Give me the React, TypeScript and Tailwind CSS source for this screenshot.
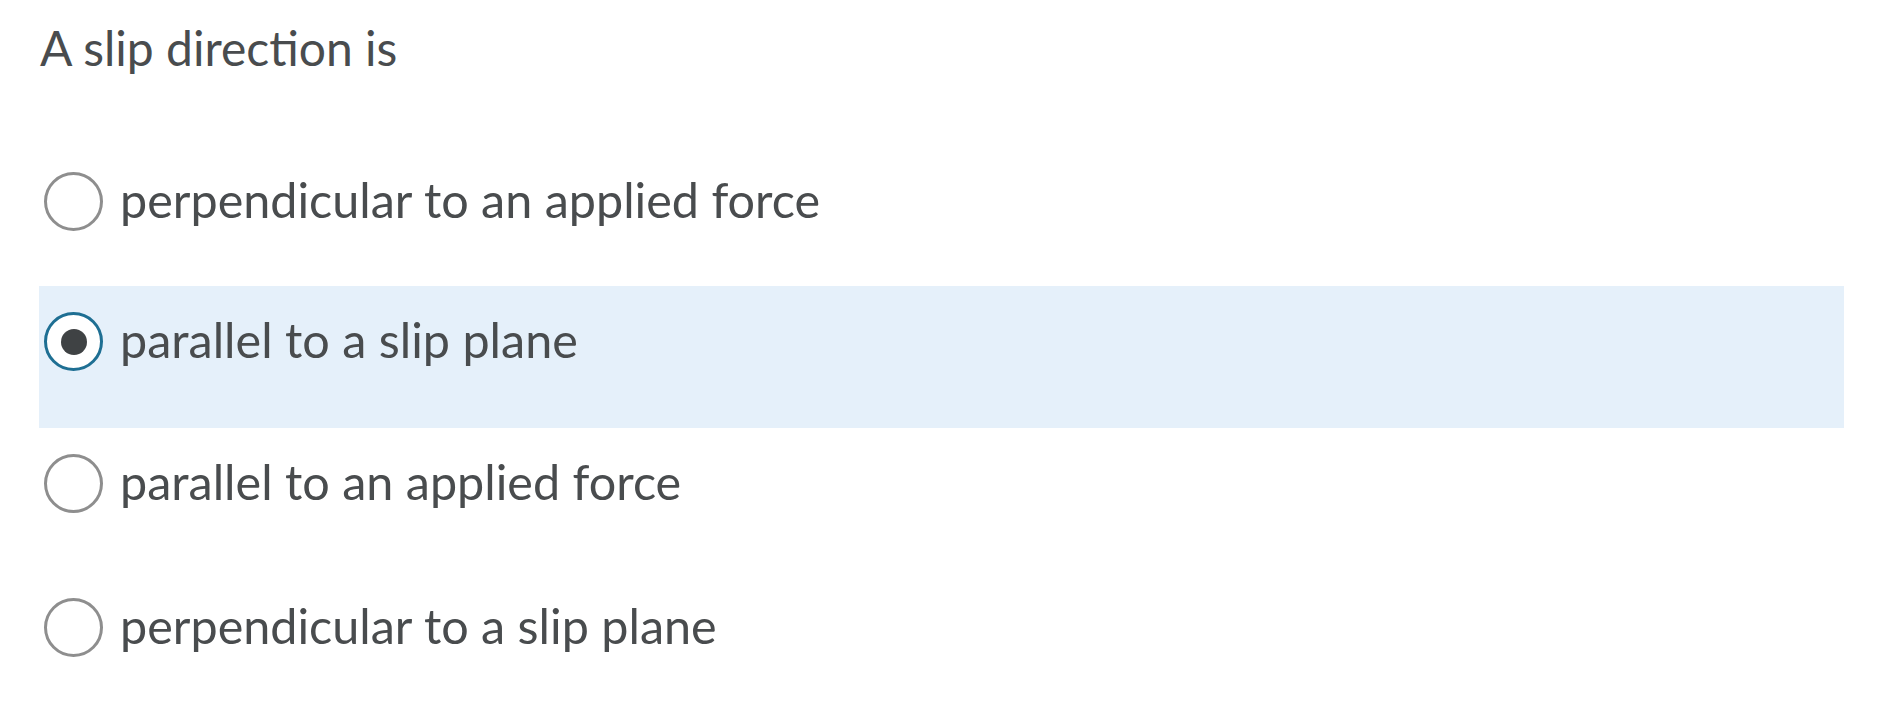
const options = [
	{ text: "perpendicular to an applied force", h: "h-[140px]" },
	{ text: "parallel to a slip plane", h: "h-[142px]" },
	{ text: "parallel to an applied force", h: "h-[144px]" },
	{ text: "perpendicular to a slip plane", h: "h-[140px]" },
]

const selected = 1

function Radio({ checked }: { checked: boolean }) {
	if (checked) {
		return (
			<div className="mt-[26px] flex h-[59px] w-[59px] shrink-0 items-center justify-center rounded-full border-[3px] border-[#1e6f93] bg-white">
				<div className="h-[26px] w-[26px] rounded-full bg-[#3f4244]" />
			</div>
		)
	}
	return <div className="mt-[26px] h-[59px] w-[59px] shrink-0 rounded-full border-[3px] border-[#8e8e8e] bg-white" />
}

export default function App() {
	return (
		<div className="min-h-screen w-full bg-white text-[#494c4e]" style={{ fontFamily: "Lato, 'Noto Sans', sans-serif" }}>
			<div className="h-[146px] pl-[40px] pt-[19px]">
				<p className="text-[48px] leading-[58px]">A slip direction is</p>
			</div>
			<div className="ml-[39px] w-[1805px]">
				{options.map((o, i) => (
					<div
						key={o.text}
						className={`flex ${o.h} items-start gap-[17px] pl-[5px] ${i === selected ? "bg-[#e5f0fa]" : ""}`}
					>
						<Radio checked={i === selected} />
						<span className="mt-[24px] text-[48.5px] leading-[58px]">{o.text}</span>
					</div>
				))}
			</div>
		</div>
	)
}
